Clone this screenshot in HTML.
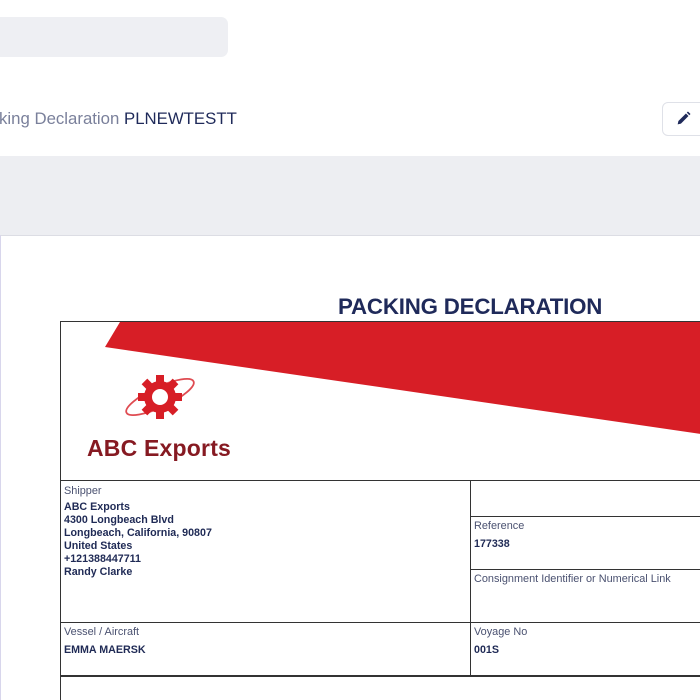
<!DOCTYPE html>
<html style="width:700px;height:700px;overflow:hidden"><head><meta charset="utf-8"><style>
*{margin:0;padding:0;box-sizing:border-box}
body{width:700px;height:700px;overflow:hidden;background:#fff;font-family:"Liberation Sans",Arial,sans-serif;position:relative}
.a{position:absolute}
.lbl{font-size:10.9px;color:#4a5170}
.val{font-size:10.7px;font-weight:bold;color:#1f2a55;line-height:13px}
</style></head><body>
<div class="a" style="left:-10px;top:17px;width:238px;height:40px;background:#eeeff3;border-radius:7px"></div>
<div class="a" style="left:-1px;top:109px;font-size:16.8px;color:#7a809b;white-space:nowrap">king Declaration <span style="color:#1f2a5a">PLNEWTESTT</span></div>
<div class="a" style="left:662px;top:102px;width:50px;height:34px;border:1px solid #dfe1e8;border-radius:6px;background:#fff"></div>
<svg class="a" style="left:675px;top:110px" width="17" height="17" viewBox="0 0 16 16"><path d="M2.5 13.5 L3.2 10.4 L10.3 3.3 L12.7 5.7 L5.6 12.8 Z" fill="#1f2a5a"/><path d="M11.1 2.5 L12.2 1.4 L14.6 3.8 L13.5 4.9 Z" fill="#1f2a5a"/></svg>
<div class="a" style="left:0;top:156px;width:700px;height:79px;background:#edeef2"></div>
<div class="a" style="left:0;top:235px;width:700px;height:465px;border-left:1px solid #d8d6ec;border-top:1px solid #dcdde4;background:#fff"></div>
<div class="a" style="left:338px;top:294px;font-size:22.3px;font-weight:bold;color:#1f2a5a;letter-spacing:-0.2px">PACKING DECLARATION</div>
<div class="a" style="left:60px;top:321px;width:640px;height:379px;border-left:1px solid #333;border-top:1px solid #333"></div>
<svg class="a" style="left:61px;top:322px" width="640" height="158"><polygon points="59,0 640,0 640,112 44,25" fill="#d71e26"/>
<g transform="translate(99,75)" fill="#d71e26">
<circle r="16"/>
<g id="t"><rect x="-4" y="-22" width="8" height="8"/></g>
<use href="#t" transform="rotate(45)"/><use href="#t" transform="rotate(90)"/><use href="#t" transform="rotate(135)"/><use href="#t" transform="rotate(180)"/><use href="#t" transform="rotate(225)"/><use href="#t" transform="rotate(270)"/><use href="#t" transform="rotate(315)"/>
<circle r="8" fill="#fff"/>
<ellipse rx="37" ry="10" transform="rotate(-25)" fill="none" stroke="#d71e26" stroke-width="1.8" opacity="0.8"/>
</g></svg>
<div class="a" style="left:87px;top:435px;font-size:23px;font-weight:bold;color:#861a22;letter-spacing:0.2px">ABC Exports</div>
<div class="a" style="left:60px;top:480px;width:640px;border-top:1px solid #333"></div>
<div class="a" style="left:470px;top:480px;height:195px;border-left:1px solid #333"></div>
<div class="a" style="left:470px;top:516px;width:230px;border-top:1px solid #333"></div>
<div class="a" style="left:470px;top:569px;width:230px;border-top:1px solid #333"></div>
<div class="a" style="left:60px;top:622px;width:640px;border-top:1px solid #333"></div>
<div class="a" style="left:60px;top:675px;width:640px;border-top:2px solid #333"></div>
<div class="a lbl" style="left:64px;top:485px">Shipper</div>
<div class="a val" style="left:64px;top:501px">ABC Exports<br>4300 Longbeach Blvd<br>Longbeach, California, 90807<br>United States<br>+121388447711<br>Randy Clarke</div>
<div class="a lbl" style="left:474px;top:520px">Reference</div>
<div class="a val" style="left:474px;top:538px">177338</div>
<div class="a lbl" style="left:474px;top:573px">Consignment Identifier or Numerical Link</div>
<div class="a lbl" style="left:64px;top:626px">Vessel / Aircraft</div>
<div class="a val" style="left:64px;top:644px">EMMA MAERSK</div>
<div class="a lbl" style="left:474px;top:626px">Voyage No</div>
<div class="a val" style="left:474px;top:644px">001S</div>
</body></html>
